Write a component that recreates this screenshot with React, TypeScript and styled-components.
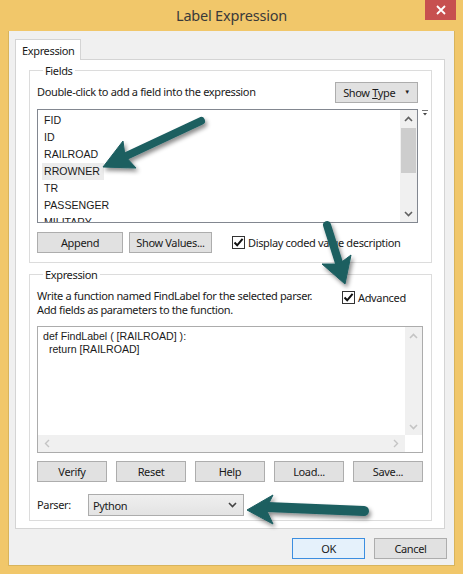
import React from "react";
import styled, {createGlobalStyle} from "styled-components";

const GlobalStyle = createGlobalStyle`
    html, body {
        margin: 0;
        padding: 0;
        background: #f1c76a;
    }
`;

const UI_FONT = `"Noto Sans", "Open Sans", sans-serif`;
const LIST_FONT = `"Liberation Sans", Arial, sans-serif`;

const fields = ["FID", "ID", "RAILROAD", "RROWNER", "TR", "PASSENGER", "MILITARY"];

const Check = () => <CheckBox>
    <svg width="11" height="11" viewBox="0 0 11 11">
        <path d="M1.5 5.5 L4.2 8.3 L9.6 1.8" fill="none" stroke="#111" strokeWidth="2"/>
    </svg>
</CheckBox>;

const Chevron = (props: { up?: boolean; color?: string }) =>
    <svg width="9" height="6" viewBox="0 0 9 6">
        <path d={props.up ? "M1 5 L4.5 1.5 L8 5" : "M1 1 L4.5 4.5 L8 1"} fill="none"
              stroke={props.color || "#606060"} strokeWidth="1.6"/>
    </svg>;

const SideChevron = (props: { right?: boolean }) =>
    <svg width="6" height="9" viewBox="0 0 6 9">
        <path d={props.right ? "M1 1 L4.5 4.5 L1 8" : "M5 1 L1.5 4.5 L5 8"} fill="none"
              stroke="#c4c4c4" strokeWidth="1.4"/>
    </svg>;

const Arrows = () => <ArrowLayer viewBox="0 0 463 574" width="463" height="574">
    <defs>
        <filter id="sh" x="-20%" y="-20%" width="140%" height="140%">
            <feDropShadow dx="2" dy="3" stdDeviation="2" floodColor="#000" floodOpacity="0.45"/>
        </filter>
    </defs>
    <g filter="url(#sh)" fill="#1b5e61" stroke="#1b5e61">
        <line x1="124" y1="157" x2="201" y2="121" strokeWidth="8" strokeLinecap="round"/>
        <polygon points="103,167 123,141 125,156 136,168" strokeWidth="1"/>

        <line x1="327" y1="225" x2="339" y2="263" strokeWidth="8" strokeLinecap="round"/>
        <polygon points="345,284 322,264 339,264 351,255" strokeWidth="1"/>

        <line x1="267" y1="507" x2="364" y2="511" strokeWidth="10" strokeLinecap="round"/>
        <polygon points="247,510 273,495 266,509 273,524" strokeWidth="1"/>
    </g>
</ArrowLayer>;

export default function App() {
    return <>
        <GlobalStyle/>
        <Window>
            <TitleBar>
                <span/>
                <Title>Label Expression</Title>
                <CloseButton>
                    <svg width="10" height="10" viewBox="0 0 10 10">
                        <path d="M1 1 L9 9 M9 1 L1 9" stroke="#fff" strokeWidth="1.8"/>
                    </svg>
                </CloseButton>
            </TitleBar>
            <Client>
                <TabStrip>
                    <Tab>Expression</Tab>
                </TabStrip>
                <TabPane>
                    <GroupBox>
                        <Legend>Fields</Legend>
                        <HintRow>
                            <Label>Double-click to add a field into the expression</Label>
                            <Button $width={83}>
                                <span>Show <u>T</u>ype</span>
                                <DropTriangle>▼</DropTriangle>
                            </Button>
                        </HintRow>
                        <ListRow>
                            <FieldList>
                                <ListItems>
                                    {fields.map((f) => <ListItem key={f} $hot={f === "RROWNER"}>{f}</ListItem>)}
                                </ListItems>
                                <VScroll>
                                    <ScrollArrow><Chevron up/></ScrollArrow>
                                    <Thumb/>
                                    <ScrollArrow><Chevron/></ScrollArrow>
                                </VScroll>
                            </FieldList>
                            <MiniDrop>
                                <svg width="6" height="8" viewBox="0 0 6 8">
                                    <path d="M0 0.5 H6" stroke="#777" strokeWidth="1"/>
                                    <path d="M1 3 H5 L3 5.5 Z" fill="#444"/>
                                </svg>
                            </MiniDrop>
                        </ListRow>
                        <ButtonRow>
                            <Button $width={86}>Append</Button>
                            <Button $width={83}>Show Values...</Button>
                            <CheckLabel $left={14}><Check/>Display coded value description</CheckLabel>
                        </ButtonRow>
                    </GroupBox>

                    <GroupBox $expression>
                        <Legend>Expression</Legend>
                        <DescRow>
                            <Label>
                                Write a function named FindLabel for the selected parser.<br/>
                                Add fields as parameters to the function.
                            </Label>
                            <CheckLabel $left={0}><Check/>Advanced</CheckLabel>
                        </DescRow>
                        <CodeBox>
                            <CodeMain>
                                <CodeText>{"def FindLabel ( [RAILROAD] ):\n  return [RAILROAD]"}</CodeText>
                                <VScroll>
                                    <ScrollArrow><Chevron up color="#c4c4c4"/></ScrollArrow>
                                    <Spacer/>
                                    <ScrollArrow><Chevron color="#c4c4c4"/></ScrollArrow>
                                </VScroll>
                            </CodeMain>
                            <HScroll>
                                <SideChevron/>
                                <SideChevron right/>
                            </HScroll>
                        </CodeBox>
                        <ActionRow>
                            {["Verify", "Reset", "Help", "Load...", "Save..."].map((b) =>
                                <Button key={b} $width={70}>{b}</Button>)}
                        </ActionRow>
                        <ParserRow>
                            <Label>Parser:</Label>
                            <Combo>
                                <span>Python</span>
                                <Chevron color="#444"/>
                            </Combo>
                        </ParserRow>
                    </GroupBox>
                </TabPane>
                <Footer>
                    <Button $width={73} $default>OK</Button>
                    <Button $width={73}>Cancel</Button>
                </Footer>
            </Client>
            <Arrows/>
        </Window>
    </>;
}

const Window = styled.div`
    position: relative;
    width: 463px;
    height: 574px;
    box-sizing: border-box;
    padding: 0 8px 8px 8px;
    
    display: flex;
    flex-direction: column;
    
    background: #f1c76a;
    font-family: ${UI_FONT};
    font-size: 11px;
    letter-spacing: -0.35px;
    color: #1a1a1a;
    overflow: hidden;
`;

const TitleBar = styled.div`
    height: 31px;
    flex-shrink: 0;
    
    display: grid;
    grid-template-columns: 1fr auto 1fr;
    align-items: start;
`;

const Title = styled.div`
    margin-top: 5px;
    font-size: 14.5px;
    letter-spacing: -0.2px;
    color: #3a3a3a;
`;

const CloseButton = styled.div`
    justify-self: end;
    width: 31px;
    height: 20px;
    margin-right: -1px;
    
    display: flex;
    justify-content: center;
    align-items: center;
    
    background: #c7504f;
`;

const Client = styled.div`
    flex: 1;
    box-sizing: border-box;
    padding: 7px 9px 0 6px;
    
    display: flex;
    flex-direction: column;
    
    background: #f0f0f0;
    border: 1px solid #d8b45c;
    border-top: none;
`;

const TabStrip = styled.div`
    height: 21px;
    display: flex;
    align-items: flex-end;
`;

const Tab = styled.div`
    width: 66px;
    height: 21px;
    box-sizing: border-box;
    margin-bottom: -1px;
    padding: 3px 0 0 6px;
    
    background: #ffffff;
    border: 1px solid #d4d4d4;
    border-bottom: none;
    position: relative;
    z-index: 1;
`;

const TabPane = styled.div`
    height: 470px;
    box-sizing: border-box;
    padding: 3px 12px 0 13px;
    
    display: flex;
    flex-direction: column;
    gap: 4px;
    
    background: #ffffff;
    border: 1px solid #d4d4d4;
`;

const GroupBox = styled.fieldset<{ $expression?: boolean }>`
    margin: 0;
    padding: 0 13px 0 7px;
    height: ${(p) => p.$expression ? 254 : 200}px;
    box-sizing: border-box;
    
    display: flex;
    flex-direction: column;
    
    border: 1px solid #dcdcdc;
    border-radius: 0;
    min-width: 0;
`;

const Legend = styled.legend`
    padding: 0 2px;
    margin-left: 6px;
    line-height: 15px;
`;

const Label = styled.div`
    line-height: 13.5px;
    white-space: nowrap;
`;

const HintRow = styled.div`
    height: 20px;
    margin-top: 4px;
    
    display: flex;
    justify-content: space-between;
    align-items: center;
`;

const Button = styled.div<{ $width: number; $default?: boolean }>`
    width: ${(p) => p.$width}px;
    height: 21px;
    box-sizing: border-box;
    flex-shrink: 0;
    
    display: flex;
    justify-content: center;
    align-items: center;
    gap: 9px;
    
    background: ${(p) => p.$default ? "#e5f1fb" : "#e1e1e1"};
    border: 1px solid ${(p) => p.$default ? "#3c8ee0" : "#adadad"};
`;

const DropTriangle = styled.span`
    font-size: 6px;
    color: #222;
`;

const ListRow = styled.div`
    margin-top: 7px;
    margin-right: -10px;
    
    display: flex;
    align-items: flex-start;
    gap: 4px;
`;

const FieldList = styled.div`
    width: 383px;
    height: 114px;
    box-sizing: border-box;
    
    display: flex;
    
    border: 1px solid #828790;
    background: #fff;
    overflow: hidden;
`;

const ListItems = styled.div`
    flex: 1;
    padding: 2px 0 0 4px;
    
    display: flex;
    flex-direction: column;
    align-items: flex-start;
`;

const ListItem = styled.div<{ $hot?: boolean }>`
    height: 17px;
    line-height: 17px;
    padding: 0 4px 0 2px;
    
    font-family: ${LIST_FONT};
    font-size: 10.6px;
    letter-spacing: 0;
    background: ${(p) => p.$hot ? "#ececec" : "transparent"};
`;

const VScroll = styled.div`
    width: 17px;
    flex-shrink: 0;
    
    display: flex;
    flex-direction: column;
    
    background: #f0f0f0;
`;

const ScrollArrow = styled.div`
    height: 17px;
    display: flex;
    justify-content: center;
    align-items: center;
`;

const Thumb = styled.div`
    height: 45px;
    margin: 1px 1px auto 1px;
    flex-shrink: 0;
    background: #cdcdcd;
`;

const Spacer = styled.div`
    flex: 1;
`;

const MiniDrop = styled.div`
    margin-top: 1px;
    display: flex;
`;

const ButtonRow = styled.div`
    margin-top: 9px;
    
    display: flex;
    align-items: center;
    gap: 6px;
`;

const CheckLabel = styled.div<{ $left: number }>`
    margin-left: ${(p) => p.$left}px;
    
    display: flex;
    align-items: center;
    gap: 3px;
    
    white-space: nowrap;
`;

const CheckBox = styled.div`
    width: 13px;
    height: 13px;
    box-sizing: border-box;
    
    display: flex;
    justify-content: center;
    align-items: center;
    
    border: 1px solid #333;
    background: #fff;
`;

const DescRow = styled.div`
    margin-top: 7px;
    
    display: grid;
    grid-template-columns: 305px auto;
    align-items: start;
    
    & > ${CheckLabel} {
        margin-top: 1px;
    }
`;

const CodeBox = styled.div`
    width: 386px;
    height: 127px;
    box-sizing: border-box;
    margin-top: 10px;
    
    display: flex;
    flex-direction: column;
    
    border: 1px solid #acacac;
    background: #fff;
`;

const CodeMain = styled.div`
    flex: 1;
    display: flex;
`;

const CodeText = styled.pre`
    flex: 1;
    margin: 0;
    padding: 3px 5px;
    
    font-family: ${LIST_FONT};
    font-size: 10.6px;
    letter-spacing: 0;
    line-height: 13px;
    white-space: pre;
`;

const HScroll = styled.div`
    height: 17px;
    margin-right: 17px;
    padding: 0 6px;
    
    display: flex;
    justify-content: space-between;
    align-items: center;
    
    background: #f0f0f0;
`;

const ActionRow = styled.div`
    width: 386px;
    margin-top: 8px;
    
    display: flex;
    justify-content: space-between;
`;

const ParserRow = styled.div`
    margin-top: 12px;
    
    display: flex;
    align-items: center;
    gap: 17px;
`;

const Combo = styled.div`
    width: 156px;
    height: 22px;
    box-sizing: border-box;
    padding: 0 6px 0 4px;
    
    display: flex;
    justify-content: space-between;
    align-items: center;
    
    background: linear-gradient(#efefef, #e3e3e3);
    border: 1px solid #acacac;
`;

const Footer = styled.div`
    margin-top: 9px;
    margin-right: -2px;
    
    display: flex;
    justify-content: flex-end;
    gap: 9px;
`;

const ArrowLayer = styled.svg`
    position: absolute;
    left: 0;
    top: 0;
    pointer-events: none;
`;
